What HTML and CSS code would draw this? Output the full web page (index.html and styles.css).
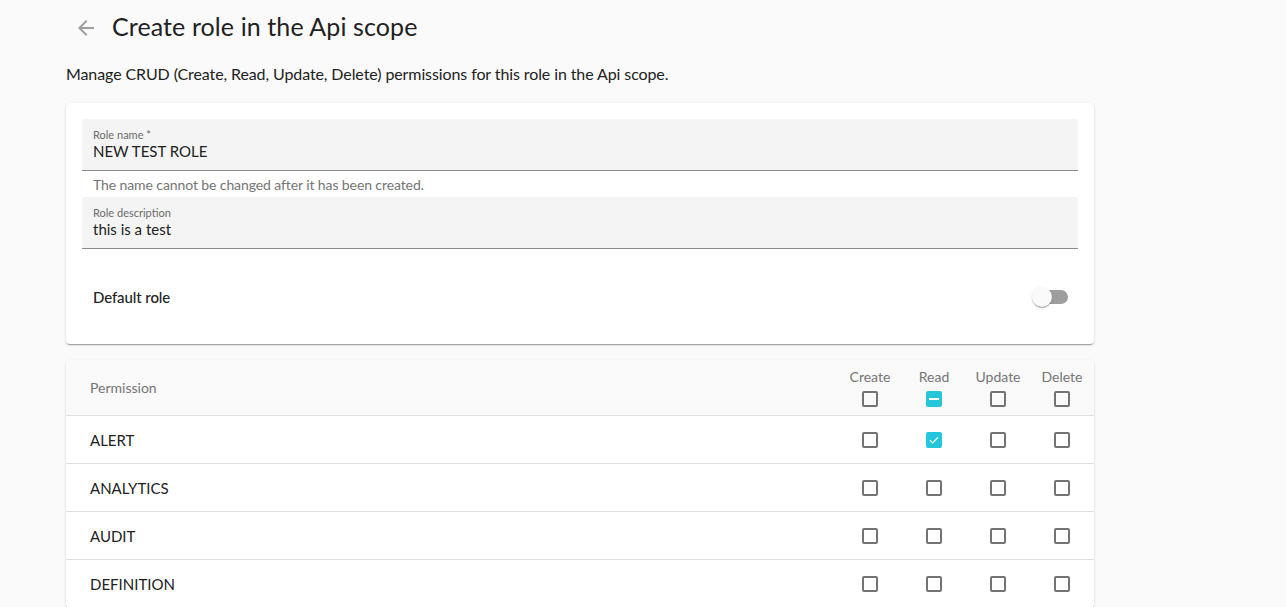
FILE: index.html
```html
<!DOCTYPE html>
<html>
<head>
<meta charset="utf-8">
<link rel="stylesheet" href="styles.css">
</head>
<body>
<div class="page">
  <div class="title-row">
    <button class="back" aria-label="Back">
      <svg width="24" height="24" viewBox="0 0 24 24"><path d="M20 11H7.83l5.59-5.59L12 4l-8 8 8 8 1.41-1.41L7.83 13H20v-2z" fill="#9e9e9e"/></svg>
    </button>
    <h1 class="title">Create role in the Api scope</h1>
  </div>
  <p class="subtitle">Manage CRUD (Create, Read, Update, Delete) permissions for this role in the Api scope.</p>

  <div class="card form-card">
    <div class="field">
      <div class="field-label">Role name *</div>
      <div class="field-value">NEW TEST ROLE</div>
    </div>
    <div class="hint">The name cannot be changed after it has been created.</div>
    <div class="field">
      <div class="field-label">Role description</div>
      <div class="field-value">this is a test</div>
    </div>
    <div class="toggle-row">
      <span class="toggle-label">Default role</span>
      <span class="toggle"><span class="track"></span><span class="thumb"></span></span>
    </div>
  </div>

  <div class="card table-card">
    <div class="trow thead">
      <div class="perm head-label">Permission</div>
      <div class="col"><span class="col-label">Create</span><span class="cb"></span></div>
      <div class="col"><span class="col-label">Read</span><span class="cb on"><span class="dash"></span></span></div>
      <div class="col"><span class="col-label">Update</span><span class="cb"></span></div>
      <div class="col"><span class="col-label">Delete</span><span class="cb"></span></div>
    </div>
    <div class="trow">
      <div class="perm">ALERT</div>
      <div class="col"><span class="cb"></span></div>
      <div class="col"><span class="cb on"><svg width="12" height="12" viewBox="0 0 12 12"><path d="M2 6.3l2.6 2.6L10 3.4" fill="none" stroke="#fff" stroke-width="1.3"/></svg></span></div>
      <div class="col"><span class="cb"></span></div>
      <div class="col"><span class="cb"></span></div>
    </div>
    <div class="trow">
      <div class="perm">ANALYTICS</div>
      <div class="col"><span class="cb"></span></div>
      <div class="col"><span class="cb"></span></div>
      <div class="col"><span class="cb"></span></div>
      <div class="col"><span class="cb"></span></div>
    </div>
    <div class="trow">
      <div class="perm">AUDIT</div>
      <div class="col"><span class="cb"></span></div>
      <div class="col"><span class="cb"></span></div>
      <div class="col"><span class="cb"></span></div>
      <div class="col"><span class="cb"></span></div>
    </div>
    <div class="trow">
      <div class="perm">DEFINITION</div>
      <div class="col"><span class="cb"></span></div>
      <div class="col"><span class="cb"></span></div>
      <div class="col"><span class="cb"></span></div>
      <div class="col"><span class="cb"></span></div>
    </div>
  </div>
</div>
</body>
</html>
```
FILE: styles.css
```css
html, body {
  margin: 0;
  padding: 0;
  background: #fafafa;
  font-family: Lato, "Liberation Sans", sans-serif;
  color: #212121;
  overflow: hidden;
}
.page {
  width: 1028px;
  margin-left: 66px;
}
.title-row {
  display: flex;
  align-items: center;
  height: 40px;
  margin-top: 8px;
}
.back {
  width: 24px;
  height: 24px;
  padding: 0;
  margin-left: 8px;
  border: 0;
  background: none;
  display: flex;
}
.title {
  margin: 0 0 0 14px;
  font-size: 25px;
  letter-spacing: 0.1px;
  font-weight: 400;
  line-height: 40px;
  color: #212121;
  position: relative;
  top: -2px;
}
.subtitle {
  margin: 16px 0 0 0;
  font-size: 16px;
  letter-spacing: -0.1px;
  line-height: 20px;
  color: #212121;
}
.card {
  background: #fff;
  border-radius: 4px;
  box-shadow: 0 2px 1px -1px rgba(0,0,0,.2), 0 1px 1px 0 rgba(0,0,0,.14), 0 1px 3px 0 rgba(0,0,0,.12);
}
.form-card {
  margin-top: 19px;
  padding: 16px 16px 23px 16px;
}
.field {
  background: #f4f4f4;
  border-radius: 4px 4px 0 0;
  border-bottom: 1px solid #8a8a8a;
  height: 51px;
  padding: 0 11px;
  box-sizing: content-box;
  display: flex;
  flex-direction: column;
}
.field-label {
  font-size: 11px;
  color: #6b6b6b;
  margin-top: 9px;
  line-height: 13px;
}
.field-value {
  font-size: 15px;
  line-height: 20px;
  color: #212121;
  margin-top: 0;
}
.hint {
  font-size: 14px;
  letter-spacing: -0.1px;
  color: #757575;
  padding: 6px 11px 0 11px;
  height: 20px;
  line-height: 16px;
}
.toggle-row {
  display: flex;
  align-items: center;
  justify-content: space-between;
  height: 48px;
  margin-top: 24px;
  padding: 0 10px 0 11px;
}
.toggle-label {
  font-size: 15px;
  font-weight: 500;
  letter-spacing: -0.1px;
  color: #212121;
}
.toggle {
  position: relative;
  width: 36px;
  height: 20px;
  display: inline-block;
}
.track {
  position: absolute;
  left: 2px;
  top: 3px;
  width: 34px;
  height: 14px;
  border-radius: 7px;
  background: #9e9e9e;
}
.thumb {
  position: absolute;
  left: 0;
  top: 0;
  width: 20px;
  height: 20px;
  border-radius: 50%;
  background: #fafafa;
  box-shadow: 0 2px 1px -1px rgba(0,0,0,.2), 0 1px 1px 0 rgba(0,0,0,.14), 0 1px 3px 0 rgba(0,0,0,.12);
}
.table-card {
  margin-top: 16px;
  overflow: hidden;
}
.trow {
  display: flex;
  align-items: center;
  height: 47px;
  border-bottom: 1px solid #e0e0e0;
}
.thead {
  height: 55px;
  background: #f9f9f9;
  border-radius: 4px 4px 0 0;
}
.perm {
  flex: 1;
  padding-left: 24px;
  font-size: 15px;
  color: #212121;
}
.head-label {
  font-size: 14px;
  color: #757575;
}
.col {
  width: 64px;
  display: flex;
  flex-direction: column;
  align-items: center;
}
.col-label {
  font-size: 14px;
  color: #757575;
  line-height: 17px;
  margin-top: 0;
  margin-bottom: 6px;
}
.cb {
  width: 16px;
  height: 16px;
  box-sizing: border-box;
  border: 2px solid #737373;
  border-radius: 2px;
  display: flex;
  align-items: center;
  justify-content: center;
}
.cb.on {
  background: #26c6da;
  border-color: #26c6da;
}
.dash {
  width: 10px;
  height: 2px;
  background: #fff;
}
```
